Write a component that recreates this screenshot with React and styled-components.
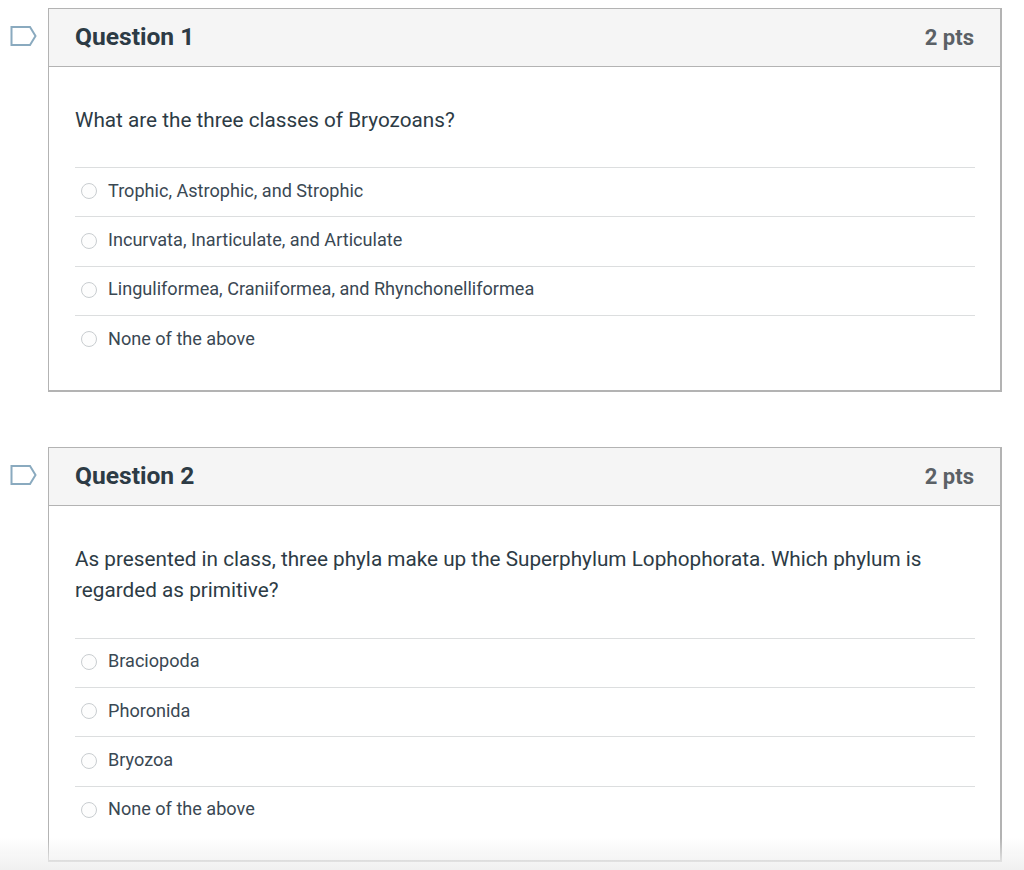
import React from "react";
import styled, { createGlobalStyle } from "styled-components";

const GlobalStyle = createGlobalStyle`
  html, body {
    margin: 0;
    padding: 0;
    background: #fff;
    font-family: Roboto, "Liberation Sans", sans-serif;
    color: #2d3b45;
  }
`;

const Page = styled.div`
  width: 1024px;
  height: 870px;
  overflow: hidden;
  box-sizing: border-box;
  padding: 8px 22px 0 10px;
  display: flex;
  flex-direction: column;
  gap: 55px;
`;

const QuestionRow = styled.div`
  display: flex;
  align-items: flex-start;
`;

const FlagHolder = styled.div`
  width: 38px;
  flex: none;
  padding-top: 17px;
  display: flex;
`;

const Card = styled.section`
  flex: 1;
  border: 1px solid #b3b3b3;
  border-bottom-width: 2px;
  border-right-width: 2px;
  background: #fff;
`;

const CardHeader = styled.header`
  height: 58px;
  box-sizing: border-box;
  display: flex;
  align-items: center;
  justify-content: space-between;
  padding: 0 26px 2px 26px;
  background: #f5f5f5;
  border-bottom: 1px solid #b3b3b3;
`;

const Title = styled.h2`
  margin: 0;
  font-size: 24.6px;
  font-weight: 700;
  color: #2d3b45;
`;

const Points = styled.span`
  font-size: 22px;
  font-weight: 700;
  color: #5b6166;
  margin-top: 2px;
`;

const CardBody = styled.div`
  padding: 38px 25px 25px 26px;
`;

const Prompt = styled.p`
  margin: 0 0 ${(p) => p.$gap}px;
  font-size: 20.72px;
  line-height: 31px;
  color: #2d3b45;
`;

const Option = styled.div`
  height: 49.4px;
  box-sizing: border-box;
  display: flex;
  align-items: center;
  gap: 11px;
  padding: 0 0 4px 6px;
  border-top: 1px solid #dcdedf;
  font-size: 18.1px;
  color: #3a4853;
`;

const Radio = styled.span`
  width: 14px;
  height: 14px;
  flex: none;
  border: 1px solid #c9cdd0;
  border-radius: 50%;
  background: #fdfdfd;
  margin-top: 2px;
`;

const BottomFade = styled.div`
  position: fixed;
  left: 0;
  right: 0;
  bottom: 0;
  height: 32px;
  background: linear-gradient(to bottom, rgba(240, 240, 240, 0), #f0f0f0);
  pointer-events: none;
`;

const Flag = () => (
  <svg width="27" height="22" viewBox="0 0 27 22" fill="none">
    <path d="M1.5 2H20L25.5 11L20 20H1.5Z" stroke="#8aaabf" strokeWidth="2" />
  </svg>
);

const questions = [
  {
    title: "Question 1",
    prompt: "What are the three classes of Bryozoans?",
    gap: 31,
    options: [
      "Trophic, Astrophic, and Strophic",
      "Incurvata, Inarticulate, and Articulate",
      "Linguliformea, Craniiformea, and Rhynchonelliformea",
      "None of the above",
    ],
  },
  {
    title: "Question 2",
    prompt:
      "As presented in class, three phyla make up the Superphylum Lophophorata. Which phylum is regarded as primitive?",
    gap: 32,
    options: ["Braciopoda", "Phoronida", "Bryozoa", "None of the above"],
  },
];

const App = () => (
  <>
    <GlobalStyle />
    <Page>
      {questions.map((q) => (
        <QuestionRow key={q.title}>
          <FlagHolder>
            <Flag />
          </FlagHolder>
          <Card>
            <CardHeader>
              <Title>{q.title}</Title>
              <Points>2 pts</Points>
            </CardHeader>
            <CardBody>
              <Prompt $gap={q.gap}>{q.prompt}</Prompt>
              {q.options.map((o) => (
                <Option key={o}>
                  <Radio />
                  {o}
                </Option>
              ))}
            </CardBody>
          </Card>
        </QuestionRow>
      ))}
    </Page>
    <BottomFade />
  </>
);

export default App;
